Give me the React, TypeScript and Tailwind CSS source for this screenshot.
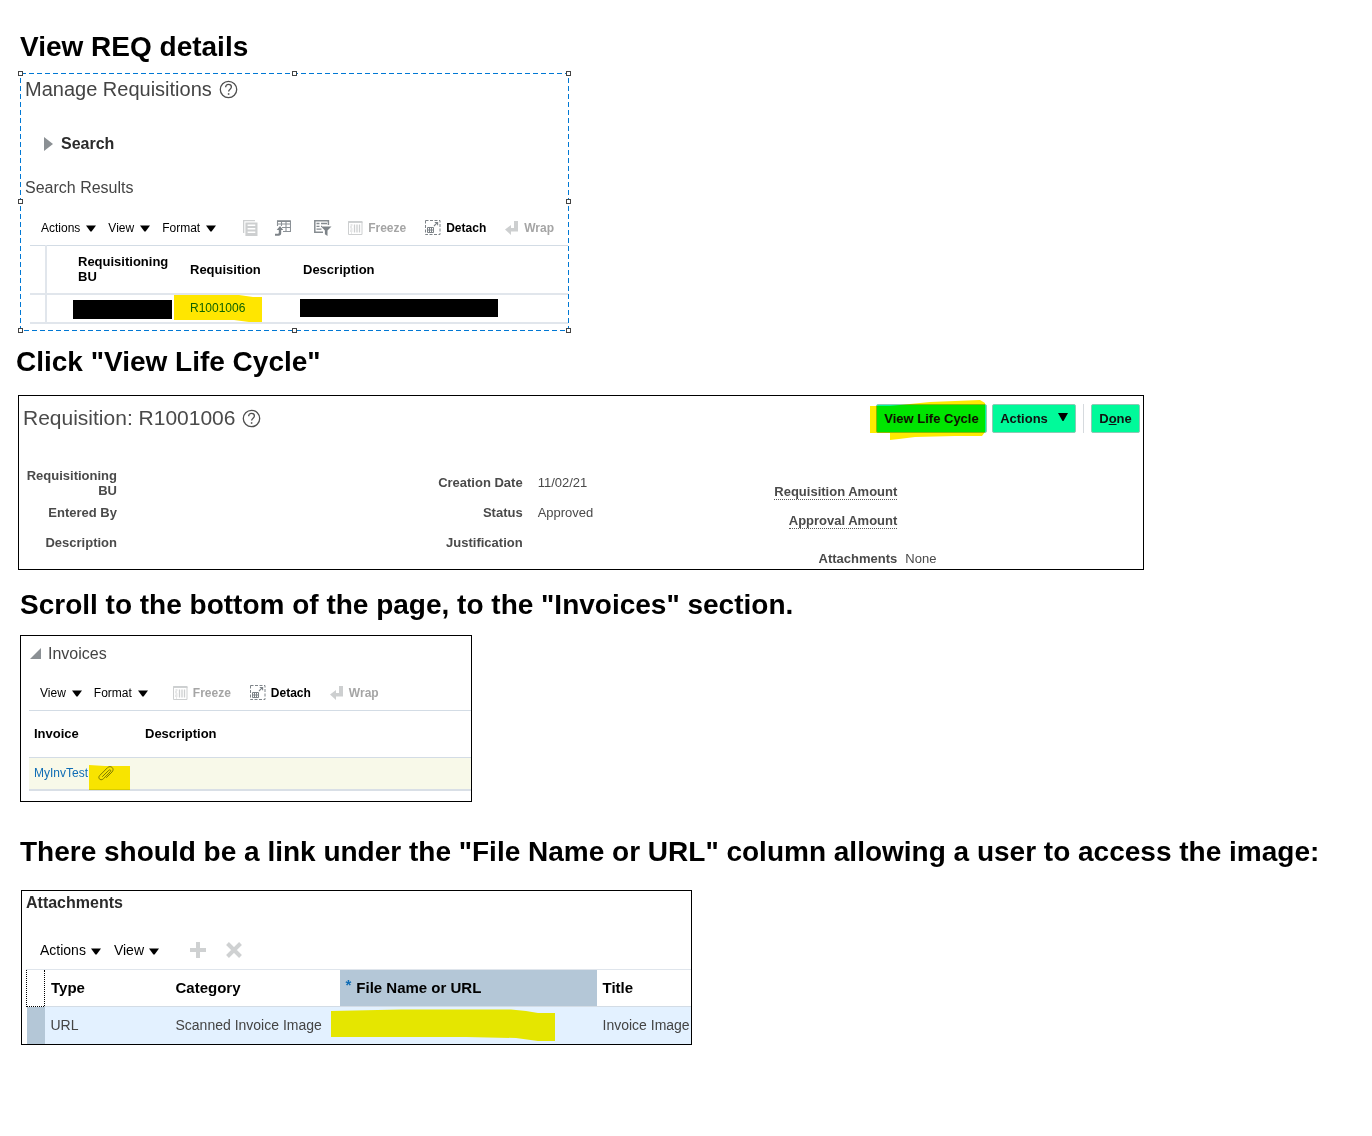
import type { ReactNode } from 'react'

function StepTitle({ children }: { children: ReactNode }) {
  return <h2 className="text-[28px] leading-8 font-bold text-black">{children}</h2>
}

function HelpIcon() {
  return (
    <svg width="19" height="19" viewBox="0 0 19 19" fill="none" stroke="#4f4f4f" strokeWidth="1.3">
      <circle cx="9.5" cy="9.5" r="8.2" />
      <path d="M6.6 7.3c0-1.8 1.2-2.9 2.9-2.9s2.9 1.100 2.900 2.600c0 2.100-2.800 2.200-2.800 4.600" />
      <path d="M9.6 13.200v1.600" strokeWidth="1.5" />
    </svg>
  )
}

function Caret() {
  return (
    <svg width="10" height="7" viewBox="0 0 10 7" className="mt-[2px]">
      <path d="M0 0.5h10L5.6 6.5H4.400z" fill="#000" />
    </svg>
  )
}

function CopyIcon() {
  return (
    <svg width="15" height="16" viewBox="0 0 15 16" fill="#cdcfd0">
      <path d="M0 0h12v1.3H1.3V13H0z" />
      <path fillRule="evenodd" d="M2.4 2.4H14.5V16H2.4zM4.6 4.6v1.5h7.7V4.6zM4.6 8.1v1.5h7.7V8.1zM4.6 11.6v1.5h7.7v-1.5z" />
    </svg>
  )
}

function ExportIcon() {
  return (
    <svg width="16" height="16" viewBox="0 0 16 16">
      <path d="M2.5 6V1h13v10.5H8M2.5 4h13M7 7.5h8.500M6.500 1v5M11 1v10.500" fill="none" stroke="#8b9196" strokeWidth="1.1" />
      <path d="M2 .4h13.600v1.600H2z" fill="#858b90" />
      <path d="M5 6l3.300 4H6.200v3.200c0 1.600-.9 2.500-2.500 2.500H0v-2h2.900c.6 0 .9-.3.9-.9V10H1.700z" fill="#7d8388" />
    </svg>
  )
}

function FilterIcon() {
  return (
    <svg width="18" height="16" viewBox="0 0 18 16">
      <path d="M14.400 5V.8H.8v11.400H9" fill="none" stroke="#858b90" strokeWidth="1.500" />
      <path d="M2.500 3.500h3M7 3.500h6M2.500 6.300h3M2.500 9.200h5M7 6.300h1" stroke="#858b90" strokeWidth="1.300" />
      <path d="M7 6.500h10.500l-4 4V16l-2.600-1.700v-3.800z" fill="#7d8388" />
    </svg>
  )
}

function FreezeIcon() {
  return (
    <svg width="15" height="14" viewBox="0 0 15 14" fill="none" stroke="#cdcfd0">
      <path d="M.5.5h13.500v13H.5z" />
      <path d="M0 1.200h14.500" strokeWidth="1.500" />
      <path d="M6.500 3.500v8M9 3.500v8M11.500 3.500v8" strokeWidth="1.300" />
      <path d="M2.500 4h2M2 6h2M2.500 8h2M2 10h2.500M3 12h1" strokeWidth="1" />
    </svg>
  )
}

function DetachIcon() {
  return (
    <svg width="16" height="15" viewBox="0 0 16 15" fill="none" stroke="#7d8388">
      <path d="M.5.5h14.500v14H.5z" strokeDasharray="3 1.500" />
      <path d="M2.500 7.500h6v5h-6zM2.500 10h6M4.500 7.500v5M6.500 7.500v5" />
      <path d="M9 6l3.300-3.300M9.800 2.500h2.800v2.800" strokeWidth="1.100" />
    </svg>
  )
}

function WrapIcon() {
  return (
    <svg width="14" height="14" viewBox="0 0 14 14">
      <path d="M9 0h4v10.500H6V14L0 8.500 6 4v3h3z" fill="#cdcfd0" />
    </svg>
  )
}

function PaperclipIcon() {
  return (
    <svg width="18" height="17" viewBox="0 0 18 17" fill="none" stroke="#7f868b" strokeWidth="1" strokeLinecap="round">
      <path d="M5.500 11.500l6.300-6.200c1.300-1.200 2.700.2 1.500 1.400l-6.900 7.100c-2.700 2.600-6.300-.6-3.600-3.400L10.500 2.700c3.300-3 7.600 1 4.500 4.300L9.500 12.500" />
    </svg>
  )
}

function Menu({ label, large }: { label: string; large?: boolean }) {
  return (
    <button type="button" className={`flex items-center text-black ${large ? 'gap-[5px] text-sm' : 'gap-[6px] text-xs'}`}>
      {label}
      <Caret />
    </button>
  )
}

function Tool({ icon, label, disabled }: { icon: ReactNode; label: string; disabled?: boolean }) {
  return (
    <button
      type="button"
      disabled={disabled}
      className="flex items-center gap-[5px] text-xs font-bold text-black disabled:text-[#a5a5a5]"
    >
      {icon}
      {label}
    </button>
  )
}

function TableTools() {
  return (
    <div className="flex items-center gap-[19px]">
      <Tool icon={<FreezeIcon />} label="Freeze" disabled />
      <Tool icon={<DetachIcon />} label="Detach" />
      <Tool icon={<WrapIcon />} label="Wrap" disabled />
    </div>
  )
}

// dashed selection frame with drag handles
function SelectionFrame() {
  const handles = [
    'left-0 top-0',
    'left-1/2 top-0',
    'left-full top-0',
    'left-0 top-1/2',
    'left-full top-1/2',
    'left-0 top-full',
    'left-1/2 top-full',
    'left-full top-full',
  ]
  return (
    <div className="pointer-events-none absolute inset-0">
      <svg className="absolute inset-0 h-full w-full overflow-visible" fill="none" stroke="#0078d4" shapeRendering="crispEdges">
        <rect x="0.5" y="0.5" width="100%" height="100%" strokeDasharray="5 3" />
      </svg>
      {handles.map((pos) => (
        <span key={pos} className={`absolute -ml-[2px] -mt-[2px] size-[5px] border border-[#444] bg-white ${pos}`} />
      ))}
    </div>
  )
}

function Field({ label, value, dotted, labelClass }: { label: ReactNode; value?: string; dotted?: boolean; labelClass: string }) {
  return (
    <div className="flex">
      <dt className={`shrink-0 text-right font-bold ${labelClass}`}>
        <span className={dotted ? 'inline-block border-b border-dotted border-[#555]' : ''}>{label}</span>
      </dt>
      <dd>{value}</dd>
    </div>
  )
}

function ManageRequisitions() {
  return (
    <section className="relative ml-1 mt-[10px] w-full max-w-[548px] pb-[6px] pt-1 text-[#444]">
      <h3 className="ml-[5px] flex h-6 items-center gap-[7px] text-[20px] leading-6">
        Manage Requisitions <HelpIcon />
      </h3>
      <button type="button" className="ml-6 mt-[31px] flex h-6 items-center gap-2 text-base font-bold text-[#2b2b2b]">
        <svg width="9" height="14" viewBox="0 0 9 14">
          <path d="M0 0l9 7-9 7z" fill="#8b9094" />
        </svg>
        Search
      </button>
      <h4 className="ml-[5px] mt-5 h-6 text-base leading-6">Search Results</h4>
      <div className="ml-[21px] mt-[10px] flex h-[35px] items-center">
        <div className="flex gap-3">
          <Menu label="Actions" />
          <Menu label="View" />
          <Menu label="Format" />
        </div>
        <div className="ml-[27px] mr-4 flex items-center">
          <button type="button" aria-label="Copy" disabled><CopyIcon /></button>
          <button type="button" aria-label="Export" className="ml-[17px]"><ExportIcon /></button>
          <button type="button" aria-label="Filter" className="ml-[23px]"><FilterIcon /></button>
        </div>
        <TableTools />
      </div>
      <div className="ml-[10px]">
        <table className="w-full table-fixed border-b-2 border-t border-b-[#e1e6ec] border-t-[#d3dce5] text-left text-black">
          <colgroup>
            <col className="w-4" />
            <col className="w-[138px]" />
            <col className="w-[113px]" />
            <col />
          </colgroup>
          <thead>
            <tr className="h-[48px] border-b-2 border-[#e1e6ec] text-[13px] leading-[15px]">
              <td className="border-r-2 border-[#e1e6ec]" />
              <th className="pl-[31px]">Requisitioning<br />BU</th>
              <th className="pl-[6px]">Requisition</th>
              <th className="pl-[6px]">Description</th>
            </tr>
          </thead>
          <tbody>
            <tr className="h-[29px] text-xs">
              <td className="border-r-2 border-[#e1e6ec]" />
              <td className="pl-[26px]"><div className="mt-[3px] h-[19px] w-[99px] bg-black" /></td>
              <td className="relative pl-[6px]">
                <a href="#requisition" className="text-[#0f6cb5]">R1001006</a>
                <svg width="88" height="28" viewBox="0 0 88 28" className="pointer-events-none absolute -left-[10px] top-0 mix-blend-multiply">
                  <path d="M0 0h65l14 2h9v25H75l-15-2H0z" fill="#ffe600" />
                </svg>
              </td>
              <td className="pl-[3px]"><div className="h-[18px] w-[198px] bg-black" /></td>
            </tr>
          </tbody>
        </table>
      </div>
      <SelectionFrame />
    </section>
  )
}

function RequisitionDetails() {
  return (
    <section className="ml-[2px] mt-[17px] w-full max-w-[1126px] border border-black pb-[3px] pt-2 text-[13px] leading-[15px] text-[#4a4a4a]">
      <div className="flex items-center pl-1 pr-[3px]">
        <h3 className="flex h-[29px] items-center gap-[7px] text-[21px] leading-7">
          Requisition: R1001006 <HelpIcon />
        </h3>
        <div className="ml-auto flex items-center gap-[5px] font-bold text-[#111]">
          <div className="relative">
            <button type="button" className="h-[29px] w-[111px] rounded-[2px] border border-[#8cc9b4] bg-[#00fa9a]">View Life Cycle</button>
            <svg width="117" height="40" viewBox="0 0 117 40" className="pointer-events-none absolute -left-[6px] -top-1 mix-blend-multiply">
              <path d="M0 6h20L60 2l50-2 5 3v29l-3 4H85l-40 1-16 2-9 1v-7H0z" fill="#ffea00" />
            </svg>
          </div>
          <button type="button" className="flex h-[29px] w-[84px] items-center justify-center gap-[10px] rounded-[2px] border border-[#8cc9b4] bg-[#00fa9a]">
            Actions
            <svg width="10" height="8" viewBox="0 0 10 8" className="-mt-[3px]">
              <path d="M0 0h10L5.500 8h-1z" fill="#000" />
            </svg>
          </button>
          <span className="mx-[2px] h-[29px] w-px bg-[#d6dade]" />
          <button type="button" className="h-[29px] w-[49px] rounded-[2px] border border-[#8cc9b4] bg-[#00fa9a]">
            D<span className="underline">o</span>ne
          </button>
        </div>
      </div>
      <dl className="mt-[35px] grid grid-cols-3">
        <div className="flex flex-col">
          <Field labelClass="w-[98px] mb-[7px]" label={<>Requisitioning<br />BU</>} />
          <Field labelClass="w-[98px] mb-[15px]" label="Entered By" />
          <Field labelClass="w-[98px]" label="Description" />
        </div>
        <div className="flex flex-col gap-[15px] pt-[7px]">
          <Field labelClass="w-[129px] mr-[15px]" label="Creation Date" value="11/02/21" />
          <Field labelClass="w-[129px] mr-[15px]" label="Status" value="Approved" />
          <Field labelClass="w-[129px] mr-[15px]" label="Justification" />
        </div>
        <div className="flex flex-col pt-4">
          <Field labelClass="w-[129px] mb-[13px]" label="Requisition Amount" dotted />
          <Field labelClass="w-[129px] mb-[22px]" label="Approval Amount" dotted />
          <Field labelClass="w-[129px] mr-2" label="Attachments" value="None" />
        </div>
      </dl>
    </section>
  )
}

function Invoices() {
  return (
    <section className="ml-1 mt-[14px] w-full max-w-[452px] border border-black pb-[10px] pt-[6px]">
      <button type="button" className="ml-[9px] flex h-6 items-center gap-[7px] text-base text-[#444]">
        <svg width="11" height="11" viewBox="0 0 11 11">
          <path d="M11 0v11H0z" fill="#8b9094" />
        </svg>
        Invoices
      </button>
      <div className="ml-[19px] mt-[10px] flex h-[34px] items-center">
        <div className="mr-[25px] flex gap-3">
          <Menu label="View" />
          <Menu label="Format" />
        </div>
        <TableTools />
      </div>
      <div className="ml-2">
        <table className="w-full table-fixed border-b-2 border-t border-b-[#d9dfe6] border-t-[#d3dce5] text-left text-black">
          <colgroup>
            <col className="w-[111px]" />
            <col />
          </colgroup>
          <thead>
            <tr className="h-[47px] border-b border-[#d3dce5] text-[13px]">
              <th className="pl-[5px]">Invoice</th>
              <th className="pl-[5px]">Description</th>
            </tr>
          </thead>
          <tbody>
            <tr className="h-[33px] bg-[#f8f9e9] text-xs">
              <td className="relative pl-[5px]">
                <div className="flex items-center gap-[9px]">
                  <a href="#invoice" className="text-[#0f6cb5]">MyInvTest</a>
                  <a href="#attachment" aria-label="Attachment"><PaperclipIcon /></a>
                </div>
                <svg width="41" height="25" viewBox="0 0 41 25" className="pointer-events-none absolute left-[60px] top-[7px] mix-blend-multiply">
                  <path d="M0 0l16 1h25v24H0z" fill="#ffea00" />
                </svg>
              </td>
              <td />
            </tr>
          </tbody>
        </table>
      </div>
    </section>
  )
}

function Attachments() {
  return (
    <section className="ml-[5px] mt-[22px] w-full max-w-[671px] border border-black pt-[2px]">
      <h3 className="ml-1 h-5 text-base leading-5 font-bold text-[#2b2b2b]">Attachments</h3>
      <div className="ml-[18px] mt-[18px] flex h-[38px] items-center">
        <div className="mr-[31px] flex gap-[13px]">
          <Menu label="Actions" large />
          <Menu label="View" large />
        </div>
        <button type="button" aria-label="Add" disabled>
          <svg width="16" height="16" viewBox="0 0 16 16">
            <path d="M8 0v16M0 8h16" stroke="#cfd1d2" strokeWidth="4" />
          </svg>
        </button>
        <button type="button" aria-label="Remove" disabled className="ml-5">
          <svg width="16" height="16" viewBox="0 0 16 16">
            <path d="M1.500 1.500l13 13M14.500 1.500l-13 13" stroke="#cfd1d2" strokeWidth="4" />
          </svg>
        </button>
      </div>
      <div className="ml-1">
        <table className="w-full table-fixed border-t border-[#dfe5ec] text-left">
          <colgroup>
            <col className="w-[18px]" />
            <col className="w-[125px]" />
            <col className="w-[170px]" />
            <col className="w-[257px]" />
            <col />
          </colgroup>
          <thead>
            <tr className="h-[37px] text-[15px] text-black">
              <td className="border border-dotted border-black" />
              <th className="border-b border-[#d3dce5] pl-[6px]">Type</th>
              <th className="border-b border-[#d3dce5] pl-[6px]">Category</th>
              <th className="border-b border-[#d3dce5] bg-[#b4c7d7] pl-[6px]">
                <span className="flex items-start gap-[5px]">
                  <span className="leading-4 text-[#0f6cb5]">*</span>
                  File Name or URL
                </span>
              </th>
              <th className="border-b border-[#d3dce5] pl-[6px]">Title</th>
            </tr>
          </thead>
          <tbody>
            <tr className="h-[37px] bg-[#e3f1ff] text-sm text-[#444]">
              <td className="bg-[#b4c7d7]" />
              <td className="pl-[6px]">URL</td>
              <td className="pl-[6px]">Scanned Invoice Image</td>
              <td className="relative">
                <svg width="224" height="32" viewBox="0 0 224 32" className="pointer-events-none absolute -left-[9px] top-[2px]">
                  <path d="M0 2l70-1.500h110l15 1.500 12 2h17v28h-17l-22-3-50-1H0z" fill="#e5e600" />
                </svg>
              </td>
              <td className="whitespace-nowrap pl-[6px]">Invoice Image</td>
            </tr>
          </tbody>
        </table>
      </div>
    </section>
  )
}

export default function App() {
  return (
    <main className="min-h-screen bg-white pb-20 pl-4 pr-12 pt-[31px] font-['Liberation_Sans',Arial,sans-serif]">
      <div className="ml-1">
        <StepTitle>View REQ details</StepTitle>
      </div>
      <ManageRequisitions />
      <div className="mt-4">
        <StepTitle>Click "View Life Cycle"</StepTitle>
      </div>
      <RequisitionDetails />
      <div className="ml-1 mt-[19px]">
        <StepTitle>Scroll to the bottom of the page, to the "Invoices" section.</StepTitle>
      </div>
      <Invoices />
      <div className="ml-1 mt-[34px]">
        <StepTitle>There should be a link under the "File Name or URL" column allowing a user to access the image:</StepTitle>
      </div>
      <Attachments />
    </main>
  )
}
